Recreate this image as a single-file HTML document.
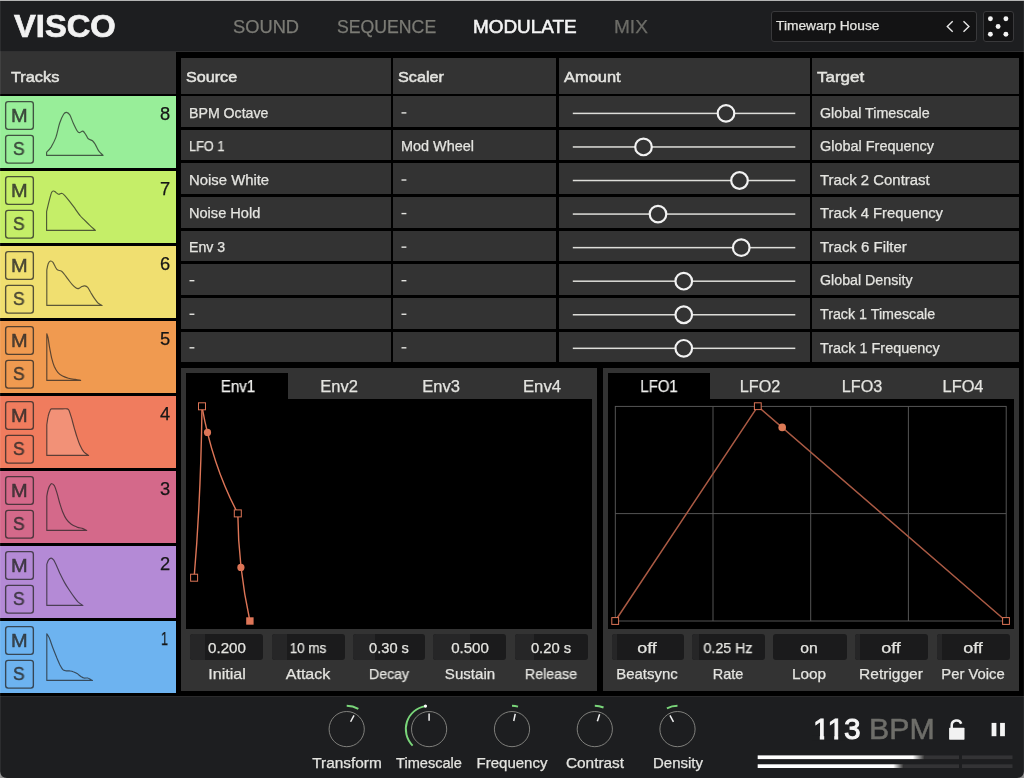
<!DOCTYPE html>
<html lang="en"><head><meta charset="utf-8"><title>VISCO</title>
<style>
html,body{margin:0;padding:0;background:#000;}
body{width:1024px;height:778px;position:relative;overflow:hidden;font-family:"Liberation Sans", sans-serif;}
.b{position:absolute;box-sizing:border-box;}
.t{will-change:transform;position:absolute;white-space:nowrap;line-height:normal;display:inline-block;}
svg{position:absolute;left:0;top:0;}

.hdr{left:0;top:0;width:1024px;height:52.3px;background:#1d1e20;border-bottom:1.5px solid #303031;}
.ftr{left:0;top:695.7px;width:1024px;height:83px;background:#1d1e20;border-top:1.6px solid #2b2b2c;}
.cell{background:#333;}
.ms{border:1.5px solid rgba(45,45,45,.75);border-radius:3px;}
.vb{background:#1b1b1c;border-radius:3px;height:26px;top:634px;}
.vf{background:#262627;border-radius:3px 0 0 3px;height:26px;top:634px;}

</style></head><body>
<div class="b hdr"></div>
<div class="b" style="left:0;top:0;width:1024px;height:1px;background:#b4b4b4"></div>
<div class="b " style="left:770.7px;top:11px;width:206.00px;height:30.50px;background:#131314;border:1px solid #39393b;border-radius:3px;"></div>
<div class="b " style="left:983px;top:11px;width:30.50px;height:30.50px;background:#131314;border:1px solid #39393b;border-radius:3px;"></div>
<svg width="1024" height="60" viewBox="0 0 1024 60">
<path d="M952.7 21.3 L947.3 26.5 L952.7 31.7" fill="none" stroke="#e8e8e8" stroke-width="1.4"/>
<path d="M963.5 21.3 L968.9 26.5 L963.5 31.7" fill="none" stroke="#e8e8e8" stroke-width="1.4"/>
<g fill="#f4f4f4"><circle cx="990.4" cy="18.75" r="2.45"/><circle cx="1005.9" cy="18.75" r="2.45"/><circle cx="998.1" cy="26.5" r="2.45"/><circle cx="990.4" cy="34.2" r="2.45"/><circle cx="1005.9" cy="34.2" r="2.45"/></g>
</svg>
<div class="b cell" style="left:0px;top:52px;width:176.00px;height:42.00px;"></div>
<div class="b " style="left:0px;top:96px;width:176.00px;height:72.30px;background:#98ee99;"></div>
<div class="b " style="left:0px;top:171px;width:176.00px;height:72.30px;background:#c5ee68;"></div>
<div class="b " style="left:0px;top:246px;width:176.00px;height:72.30px;background:#f0df70;"></div>
<div class="b " style="left:0px;top:321px;width:176.00px;height:72.30px;background:#f09a50;"></div>
<div class="b " style="left:0px;top:396px;width:176.00px;height:72.30px;background:#f07c5e;"></div>
<div class="b " style="left:0px;top:471px;width:176.00px;height:72.30px;background:#d4698a;"></div>
<div class="b " style="left:0px;top:546px;width:176.00px;height:72.30px;background:#b48ad6;"></div>
<div class="b " style="left:0px;top:621px;width:176.00px;height:72.30px;background:#6db3f0;"></div>
<svg width="180" height="700" viewBox="0 0 180 700"><path d="M46.6 155.4 L46.6 152.3 C47.4 151.4 49.5 149.6 51.1 147.1 C52.6 144.6 54.4 141.5 55.9 137.4 C57.3 133.4 58.4 126.8 59.7 123.0 C61.0 119.1 62.5 116.1 63.6 114.3 C64.7 112.5 65.5 112.3 66.5 112.4 C67.5 112.5 68.6 113.1 69.8 114.9 C70.9 116.7 72.0 120.4 73.2 123.0 C74.4 125.6 76.1 129.1 77.1 130.7 C78.1 132.3 78.4 132.6 79.4 132.6 C80.4 132.7 81.8 130.8 82.9 131.1 C83.9 131.4 84.9 133.3 85.8 134.6 C86.7 135.8 87.1 137.8 88.3 138.8 C89.4 139.8 91.3 139.8 92.5 140.7 C93.7 141.7 94.4 142.9 95.4 144.6 C96.4 146.3 97.4 149.1 98.7 150.9 C100.0 152.7 102.4 154.6 103.1 155.4 L103.1 155.4 L46.6 155.4 Z" fill="none" stroke="rgba(35,35,35,.72)" stroke-width="1.15" stroke-linejoin="round"/><path d="M46.6 230.4 L46.6 211.7 C47.0 209.9 48.3 204.3 49.1 201.1 C50.0 197.8 50.9 194.1 51.6 192.4 C52.4 190.7 52.9 191.0 53.6 191.0 C54.3 191.0 55.0 191.8 55.9 192.4 C56.7 192.9 57.8 194.2 58.8 194.3 C59.7 194.5 60.7 193.2 61.7 193.3 C62.6 193.5 63.3 194.0 64.6 195.3 C65.8 196.6 67.6 198.8 69.4 201.1 C71.1 203.3 73.4 206.4 75.2 208.8 C76.9 211.2 78.5 213.8 80.0 215.5 C81.4 217.3 82.2 217.8 83.8 219.4 C85.4 221.0 87.7 223.3 89.6 225.2 C91.5 227.0 94.4 229.5 95.4 230.4 L95.4 230.4 L46.6 230.4 Z" fill="none" stroke="rgba(35,35,35,.72)" stroke-width="1.15" stroke-linejoin="round"/><path d="M46.8 305.4 L46.8 270.1 C47.0 269.0 47.6 265.2 48.2 263.7 C48.8 262.2 49.7 261.3 50.5 261.0 C51.3 260.8 52.2 261.4 53.0 262.4 C53.8 263.4 54.7 265.9 55.5 267.2 C56.3 268.5 56.8 269.5 57.8 270.1 C58.8 270.7 60.2 270.3 61.3 271.1 C62.4 271.8 63.4 273.1 64.6 274.5 C65.7 276.0 67.1 278.1 68.4 279.7 C69.7 281.4 71.0 283.2 72.3 284.6 C73.5 285.9 75.0 287.4 76.1 288.0 C77.2 288.7 78.0 288.7 79.0 288.4 C80.0 288.2 80.9 286.9 81.9 286.5 C82.9 286.1 83.8 285.7 84.8 285.9 C85.8 286.1 86.7 286.4 87.7 287.4 C88.6 288.5 89.5 290.4 90.6 292.3 C91.7 294.1 93.1 296.6 94.4 298.4 C95.7 300.3 97.0 302.1 98.3 303.3 C99.6 304.4 101.5 305.0 102.1 305.4 L102.1 305.4 L46.8 305.4 Z" fill="none" stroke="rgba(35,35,35,.72)" stroke-width="1.15" stroke-linejoin="round"/><path d="M46.8 380.4 L46.8 333.7 C47.0 334.5 47.7 336.1 48.2 338.5 C48.6 340.9 49.1 345.0 49.7 348.2 C50.3 351.4 50.9 354.8 51.6 357.8 C52.4 360.9 53.3 364.1 54.3 366.5 C55.4 368.9 56.4 370.7 57.8 372.3 C59.2 373.9 60.9 375.1 62.6 376.1 C64.4 377.1 66.3 377.7 68.4 378.2 C70.5 378.8 73.1 379.1 75.2 379.4 C77.2 379.7 79.7 380.0 80.6 380.2 L80.6 380.4 L46.8 380.4 Z" fill="none" stroke="rgba(35,35,35,.72)" stroke-width="1.15" stroke-linejoin="round"/><path d="M46.8 455.4 L46.8 424.9 C47.0 423.5 47.6 418.7 48.2 416.2 C48.7 413.8 49.5 411.7 50.1 410.5 C50.7 409.2 50.0 409.2 51.6 408.9 C53.2 408.7 57.1 408.9 59.7 408.9 C62.4 408.9 65.8 408.5 67.4 408.9 C69.0 409.3 68.7 410.0 69.4 411.4 C70.0 412.8 70.5 414.5 71.3 417.2 C72.1 419.9 73.2 424.4 74.2 427.8 C75.2 431.2 76.1 434.6 77.1 437.4 C78.0 440.3 78.8 442.7 80.0 445.2 C81.1 447.6 82.4 450.2 83.8 451.9 C85.3 453.6 87.8 454.8 88.6 455.4 L88.6 455.4 L46.8 455.4 Z" fill="rgba(255,255,255,.16)" stroke="rgba(35,35,35,.72)" stroke-width="1.15" stroke-linejoin="round"/><path d="M46.8 530.4 L46.8 496.2 C47.0 495.1 47.6 491.4 48.2 489.5 C48.7 487.6 49.5 486.0 50.1 485.1 C50.7 484.1 51.3 483.6 52.0 483.7 C52.7 483.8 53.5 484.2 54.3 485.6 C55.1 487.1 55.9 489.5 56.8 492.4 C57.7 495.3 58.8 499.8 59.7 503.0 C60.7 506.2 61.5 508.9 62.6 511.7 C63.7 514.4 65.0 517.3 66.5 519.4 C67.9 521.5 69.5 522.9 71.3 524.2 C73.1 525.5 75.2 526.3 77.1 527.1 C79.0 527.8 81.3 528.1 82.9 528.6 C84.5 529.2 86.1 530.1 86.7 530.4 L86.7 530.4 L46.8 530.4 Z" fill="none" stroke="rgba(35,35,35,.72)" stroke-width="1.15" stroke-linejoin="round"/><path d="M46.8 605.4 L46.8 564.3 C47.1 563.6 47.8 560.9 48.6 559.9 C49.3 558.9 50.2 558.1 51.1 558.1 C51.9 558.1 52.8 558.9 53.6 559.9 C54.4 560.9 54.8 562.1 55.9 564.3 C56.9 566.5 58.3 569.9 59.7 573.0 C61.2 576.0 62.9 579.7 64.6 582.6 C66.2 585.5 67.8 587.9 69.4 590.3 C71.0 592.7 72.7 595.2 74.2 597.1 C75.6 599.0 76.6 600.5 78.0 601.9 C79.5 603.3 82.1 604.8 82.9 605.4 L82.9 605.4 L46.8 605.4 Z" fill="none" stroke="rgba(35,35,35,.72)" stroke-width="1.15" stroke-linejoin="round"/><path d="M46.8 680.4 L46.8 633.7 C47.2 634.4 48.1 635.2 49.1 637.6 C50.2 640.0 51.7 644.8 53.0 648.2 C54.3 651.5 55.7 655.1 56.8 657.8 C58.0 660.5 58.8 662.6 59.7 664.6 C60.7 666.5 61.7 668.3 62.6 669.4 C63.6 670.4 64.4 670.5 65.5 670.7 C66.6 671.0 68.1 670.8 69.4 670.9 C70.7 671.1 71.9 671.2 73.2 671.7 C74.5 672.1 75.8 672.8 77.1 673.6 C78.4 674.4 79.8 675.8 80.9 676.5 C82.1 677.2 82.7 677.8 83.8 678.0 C85.0 678.3 86.6 677.8 87.7 678.0 C88.8 678.3 89.8 679.0 90.6 679.4 C91.4 679.8 92.2 680.2 92.5 680.4 L92.5 680.4 L46.8 680.4 Z" fill="none" stroke="rgba(35,35,35,.72)" stroke-width="1.15" stroke-linejoin="round"/><rect x="5.65" y="101.65" width="27.7" height="27.7" rx="2.5" fill="none" stroke="rgba(40,40,40,.78)" stroke-width="1.35"/><rect x="5.65" y="135.35" width="27.7" height="27.7" rx="2.5" fill="none" stroke="rgba(40,40,40,.78)" stroke-width="1.35"/><rect x="5.65" y="176.65" width="27.7" height="27.7" rx="2.5" fill="none" stroke="rgba(40,40,40,.78)" stroke-width="1.35"/><rect x="5.65" y="210.35" width="27.7" height="27.7" rx="2.5" fill="none" stroke="rgba(40,40,40,.78)" stroke-width="1.35"/><rect x="5.65" y="251.65" width="27.7" height="27.7" rx="2.5" fill="none" stroke="rgba(40,40,40,.78)" stroke-width="1.35"/><rect x="5.65" y="285.35" width="27.7" height="27.7" rx="2.5" fill="none" stroke="rgba(40,40,40,.78)" stroke-width="1.35"/><rect x="5.65" y="326.65" width="27.7" height="27.7" rx="2.5" fill="none" stroke="rgba(40,40,40,.78)" stroke-width="1.35"/><rect x="5.65" y="360.35" width="27.7" height="27.7" rx="2.5" fill="none" stroke="rgba(40,40,40,.78)" stroke-width="1.35"/><rect x="5.65" y="401.65" width="27.7" height="27.7" rx="2.5" fill="none" stroke="rgba(40,40,40,.78)" stroke-width="1.35"/><rect x="5.65" y="435.35" width="27.7" height="27.7" rx="2.5" fill="none" stroke="rgba(40,40,40,.78)" stroke-width="1.35"/><rect x="5.65" y="476.65" width="27.7" height="27.7" rx="2.5" fill="none" stroke="rgba(40,40,40,.78)" stroke-width="1.35"/><rect x="5.65" y="510.35" width="27.7" height="27.7" rx="2.5" fill="none" stroke="rgba(40,40,40,.78)" stroke-width="1.35"/><rect x="5.65" y="551.65" width="27.7" height="27.7" rx="2.5" fill="none" stroke="rgba(40,40,40,.78)" stroke-width="1.35"/><rect x="5.65" y="585.35" width="27.7" height="27.7" rx="2.5" fill="none" stroke="rgba(40,40,40,.78)" stroke-width="1.35"/><rect x="5.65" y="626.65" width="27.7" height="27.7" rx="2.5" fill="none" stroke="rgba(40,40,40,.78)" stroke-width="1.35"/><rect x="5.65" y="660.35" width="27.7" height="27.7" rx="2.5" fill="none" stroke="rgba(40,40,40,.78)" stroke-width="1.35"/></svg>
<div class="b cell" style="left:181px;top:57.5px;width:209.50px;height:36.30px;"></div>
<div class="b cell" style="left:393px;top:57.5px;width:162.70px;height:36.30px;"></div>
<div class="b cell" style="left:558.5px;top:57.5px;width:251.00px;height:36.30px;"></div>
<div class="b cell" style="left:812px;top:57.5px;width:207.00px;height:36.30px;"></div>
<div class="b cell" style="left:181px;top:96.1px;width:209.50px;height:30.70px;"></div>
<div class="b cell" style="left:393px;top:96.1px;width:162.70px;height:30.70px;"></div>
<div class="b cell" style="left:558.5px;top:96.1px;width:251.00px;height:30.70px;"></div>
<div class="b cell" style="left:812px;top:96.1px;width:207.00px;height:30.70px;"></div>
<div class="b cell" style="left:181px;top:129.76px;width:209.50px;height:30.70px;"></div>
<div class="b cell" style="left:393px;top:129.76px;width:162.70px;height:30.70px;"></div>
<div class="b cell" style="left:558.5px;top:129.76px;width:251.00px;height:30.70px;"></div>
<div class="b cell" style="left:812px;top:129.76px;width:207.00px;height:30.70px;"></div>
<div class="b cell" style="left:181px;top:163.42px;width:209.50px;height:30.70px;"></div>
<div class="b cell" style="left:393px;top:163.42px;width:162.70px;height:30.70px;"></div>
<div class="b cell" style="left:558.5px;top:163.42px;width:251.00px;height:30.70px;"></div>
<div class="b cell" style="left:812px;top:163.42px;width:207.00px;height:30.70px;"></div>
<div class="b cell" style="left:181px;top:197.08px;width:209.50px;height:30.70px;"></div>
<div class="b cell" style="left:393px;top:197.08px;width:162.70px;height:30.70px;"></div>
<div class="b cell" style="left:558.5px;top:197.08px;width:251.00px;height:30.70px;"></div>
<div class="b cell" style="left:812px;top:197.08px;width:207.00px;height:30.70px;"></div>
<div class="b cell" style="left:181px;top:230.74px;width:209.50px;height:30.70px;"></div>
<div class="b cell" style="left:393px;top:230.74px;width:162.70px;height:30.70px;"></div>
<div class="b cell" style="left:558.5px;top:230.74px;width:251.00px;height:30.70px;"></div>
<div class="b cell" style="left:812px;top:230.74px;width:207.00px;height:30.70px;"></div>
<div class="b cell" style="left:181px;top:264.4px;width:209.50px;height:30.70px;"></div>
<div class="b cell" style="left:393px;top:264.4px;width:162.70px;height:30.70px;"></div>
<div class="b cell" style="left:558.5px;top:264.4px;width:251.00px;height:30.70px;"></div>
<div class="b cell" style="left:812px;top:264.4px;width:207.00px;height:30.70px;"></div>
<div class="b cell" style="left:181px;top:298.06px;width:209.50px;height:30.70px;"></div>
<div class="b cell" style="left:393px;top:298.06px;width:162.70px;height:30.70px;"></div>
<div class="b cell" style="left:558.5px;top:298.06px;width:251.00px;height:30.70px;"></div>
<div class="b cell" style="left:812px;top:298.06px;width:207.00px;height:30.70px;"></div>
<div class="b cell" style="left:181px;top:331.72px;width:209.50px;height:30.70px;"></div>
<div class="b cell" style="left:393px;top:331.72px;width:162.70px;height:30.70px;"></div>
<div class="b cell" style="left:558.5px;top:331.72px;width:251.00px;height:30.70px;"></div>
<div class="b cell" style="left:812px;top:331.72px;width:207.00px;height:30.70px;"></div>
<svg width="1024" height="370" viewBox="0 0 1024 370"><rect x="401.5" y="112.20" width="4.9" height="1.4" fill="#e4e4e0"/><rect x="572.8" y="112.65" width="222.5" height="1.5" fill="#dededa"/><circle cx="726" cy="113.40" r="8.3" fill="#333" stroke="#f2f2f2" stroke-width="2.2"/><rect x="572.8" y="146.21" width="222.5" height="1.5" fill="#dededa"/><circle cx="643.5" cy="146.96" r="8.3" fill="#333" stroke="#f2f2f2" stroke-width="2.2"/><rect x="401.5" y="179.32" width="4.9" height="1.4" fill="#e4e4e0"/><rect x="572.8" y="179.77" width="222.5" height="1.5" fill="#dededa"/><circle cx="739.5" cy="180.52" r="8.3" fill="#333" stroke="#f2f2f2" stroke-width="2.2"/><rect x="401.5" y="212.88" width="4.9" height="1.4" fill="#e4e4e0"/><rect x="572.8" y="213.33" width="222.5" height="1.5" fill="#dededa"/><circle cx="658" cy="214.08" r="8.3" fill="#333" stroke="#f2f2f2" stroke-width="2.2"/><rect x="401.5" y="246.44" width="4.9" height="1.4" fill="#e4e4e0"/><rect x="572.8" y="246.89" width="222.5" height="1.5" fill="#dededa"/><circle cx="741.25" cy="247.64" r="8.3" fill="#333" stroke="#f2f2f2" stroke-width="2.2"/><rect x="189.5" y="280.00" width="4.9" height="1.4" fill="#e4e4e0"/><rect x="401.5" y="280.00" width="4.9" height="1.4" fill="#e4e4e0"/><rect x="572.8" y="280.45" width="222.5" height="1.5" fill="#dededa"/><circle cx="683.75" cy="281.20" r="8.3" fill="#333" stroke="#f2f2f2" stroke-width="2.2"/><rect x="189.5" y="313.56" width="4.9" height="1.4" fill="#e4e4e0"/><rect x="401.5" y="313.56" width="4.9" height="1.4" fill="#e4e4e0"/><rect x="572.8" y="314.01" width="222.5" height="1.5" fill="#dededa"/><circle cx="683.75" cy="314.76" r="8.3" fill="#333" stroke="#f2f2f2" stroke-width="2.2"/><rect x="189.5" y="347.12" width="4.9" height="1.4" fill="#e4e4e0"/><rect x="401.5" y="347.12" width="4.9" height="1.4" fill="#e4e4e0"/><rect x="572.8" y="347.57" width="222.5" height="1.5" fill="#dededa"/><circle cx="683.75" cy="348.32" r="8.3" fill="#333" stroke="#f2f2f2" stroke-width="2.2"/></svg>
<div class="b cell" style="left:181.2px;top:368px;width:415.90px;height:322.60px;"></div>
<div class="b cell" style="left:602.6px;top:368px;width:416.40px;height:322.60px;"></div>
<div class="b " style="left:186px;top:373px;width:406.20px;height:255.60px;background:#000;"></div>
<div class="b " style="left:607.8px;top:373px;width:406.40px;height:255.60px;background:#000;"></div>
<div class="b cell" style="left:288px;top:373px;width:304.30px;height:25.70px;"></div>
<div class="b cell" style="left:710px;top:373px;width:304.20px;height:25.70px;"></div>
<div class="b vb" style="left:190.4px;top:634px;width:73.00px;height:25.80px;"></div>
<div class="b vf" style="left:190.4px;top:634px;width:14.60px;height:25.80px;"></div>
<div class="b vb" style="left:272.2px;top:634px;width:72.50px;height:25.80px;"></div>
<div class="b vf" style="left:272.2px;top:634px;width:14.50px;height:25.80px;"></div>
<div class="b vb" style="left:353px;top:634px;width:72.10px;height:25.80px;"></div>
<div class="b vf" style="left:353px;top:634px;width:21.63px;height:25.80px;"></div>
<div class="b vb" style="left:433px;top:634px;width:73.00px;height:25.80px;"></div>
<div class="b vf" style="left:433px;top:634px;width:36.50px;height:25.80px;"></div>
<div class="b vb" style="left:514.7px;top:634px;width:73.00px;height:25.80px;"></div>
<div class="b vf" style="left:514.7px;top:634px;width:18.98px;height:25.80px;"></div>
<div class="b vb" style="left:612.2px;top:634px;width:71.70px;height:25.80px;"></div>
<div class="b vf" style="left:612.2px;top:634px;width:5.02px;height:25.80px;"></div>
<div class="b vb" style="left:692.2px;top:634px;width:73.00px;height:25.80px;"></div>
<div class="b vf" style="left:692.2px;top:634px;width:7.30px;height:25.80px;"></div>
<div class="b vb" style="left:773px;top:634px;width:73.50px;height:25.80px;"></div>
<div class="b vb" style="left:854.9px;top:634px;width:73.40px;height:25.80px;"></div>
<div class="b vf" style="left:854.9px;top:634px;width:5.14px;height:25.80px;"></div>
<div class="b vb" style="left:936.6px;top:634px;width:73.00px;height:25.80px;"></div>
<div class="b vf" style="left:936.6px;top:634px;width:5.11px;height:25.80px;"></div>
<svg width="1024" height="700" viewBox="0 0 1024 700">
<g fill="none" stroke="#dd7557" stroke-width="1.4">
<path d="M194.1 577.7 Q200.8 500 202 406.7"/>
<path d="M202 406.7 Q212.5 466 237.8 513.4"/>
<path d="M237.8 513.4 Q238.2 567 249.9 621"/>
</g>
<g fill="#000" stroke="#dd7557" stroke-width="1">
<rect x="190.6" y="574.2" width="7" height="7"/>
<rect x="198.5" y="402.8" width="7" height="7"/>
<rect x="234.3" y="509.9" width="7" height="7"/>
</g>
<rect x="246.2" y="617.3" width="7.4" height="7.4" fill="#dd7557"/>
<circle cx="207.5" cy="432.4" r="3.6" fill="#dd7557"/>
<circle cx="240.9" cy="567.4" r="3.6" fill="#dd7557"/>
<g stroke="#595959" stroke-width="0.95" fill="none">
<rect x="615.3" y="406.4" width="390.9" height="214.6"/>
<path d="M713 406.4V621M810.7 406.4V621M908.4 406.4V621M615.3 513.6H1006.2"/>
</g>
<path d="M615.2 621 L757.8 406.3 L1005.9 621" fill="none" stroke="#aa5a44" stroke-width="1.5"/>
<g fill="#000" stroke="#dd7557" stroke-width="1">
<rect x="611.8" y="617.6" width="6.8" height="6.8"/>
<rect x="754.4" y="402.8" width="6.8" height="6.8"/>
<rect x="1002.6" y="617.6" width="6.8" height="6.8"/>
</g>
<circle cx="782.2" cy="427.4" r="3.8" fill="#dc7a56"/>
</svg>
<div class="b ftr"></div>
<svg width="1024" height="778" viewBox="0 0 1024 778"><circle cx="346.7" cy="729.1" r="17.6" fill="none" stroke="#8a8a86" stroke-width="0.9"/><path d="M346.70 705.80 A23.3 23.3 0 0 1 358.35 708.92" fill="none" stroke="#7ad67a" stroke-width="1.9"/><path d="M350.60 721.77 L354.02 715.33" stroke="#f0f0f0" stroke-width="1.5"/><circle cx="429.1" cy="729.1" r="17.6" fill="none" stroke="#8a8a86" stroke-width="0.9"/><path d="M412.62 745.58 A23.3 23.3 0 0 1 425.46 706.09" fill="none" stroke="#7ad67a" stroke-width="1.9"/><path d="M429.10 720.80 L429.10 713.50" stroke="#f0f0f0" stroke-width="1.5"/><circle cx="425.46" cy="706.09" r="1.6" fill="#fff"/><circle cx="512" cy="729.1" r="17.6" fill="none" stroke="#8a8a86" stroke-width="0.9"/><path d="M512.00 705.80 A23.3 23.3 0 0 1 518.03 706.59" fill="none" stroke="#7ad67a" stroke-width="1.9"/><path d="M513.73 720.98 L515.24 713.84" stroke="#f0f0f0" stroke-width="1.5"/><circle cx="594.8" cy="729.1" r="17.6" fill="none" stroke="#8a8a86" stroke-width="0.9"/><path d="M594.80 705.80 A23.3 23.3 0 0 1 603.53 707.50" fill="none" stroke="#7ad67a" stroke-width="1.9"/><path d="M597.36 721.21 L599.62 714.26" stroke="#f0f0f0" stroke-width="1.5"/><circle cx="677.5" cy="729.1" r="17.6" fill="none" stroke="#8a8a86" stroke-width="0.9"/><path d="M666.92 708.34 A23.3 23.3 0 0 1 677.50 705.80" fill="none" stroke="#7ad67a" stroke-width="1.9"/><path d="M673.48 721.84 L669.94 715.46" stroke="#f0f0f0" stroke-width="1.5"/><rect x="949.1" y="727.8" width="15.4" height="11.9" rx="0.6" fill="#f2f2f2"/><path d="M951.7 728.5 V725.4 A4.9 4.9 0 0 1 961.2 723.7" fill="none" stroke="#f2f2f2" stroke-width="2.5"/><rect x="991.6" y="722.9" width="4.8" height="13.3" fill="#f4f4f4"/><rect x="1000.1" y="722.9" width="4.8" height="13.3" fill="#f4f4f4"/><defs><linearGradient id="mg1" x1="0" x2="1"><stop offset="0.93" stop-color="#fff"/><stop offset="1" stop-color="#333"/></linearGradient></defs><rect x="757.7" y="755.4" width="201.3" height="3.7" fill="#333335"/><rect x="962" y="755.4" width="50.5" height="3.7" fill="#333335"/><rect x="757.7" y="755.4" width="166.8" height="3.7" fill="url(#mg1)"/><rect x="757.7" y="764.3" width="201.3" height="3.7" fill="#333335"/><rect x="962" y="764.3" width="50.5" height="3.7" fill="#333335"/><rect x="757.7" y="764.3" width="145.8" height="3.7" fill="url(#mg1)"/><path d="M0 778 V771.5 Q0.5 777.5 7 778 Z" fill="#8e8e8e"/><path d="M1024 778 V771.5 Q1023.5 777.5 1017 778 Z" fill="#8e8e8e"/><rect x="0" y="1" width="1" height="777" fill="rgba(255,255,255,.07)"/><rect x="1023" y="1" width="1" height="777" fill="rgba(255,255,255,.05)"/></svg>

<span class="t" style="left:13.52px;transform-origin:0 0;top:9.08px;font-size:31.4px;color:#f2f2f2;font-weight:700;-webkit-text-stroke:0.7px #f2f2f2;transform:scaleX(1.0424);">VISCO</span>
<span class="t" style="left:232.95px;transform-origin:0 0;top:17.26px;font-size:17.5px;color:#7b7b75;font-weight:400;-webkit-text-stroke:0.25px #7b7b75;transform:scaleX(1.0454);">SOUND</span>
<span class="t" style="left:336.65px;transform-origin:0 0;top:17.26px;font-size:17.5px;color:#7b7b75;font-weight:400;-webkit-text-stroke:0.25px #7b7b75;transform:scaleX(1.0097);">SEQUENCE</span>
<span class="t" style="left:472.95px;transform-origin:0 0;top:17.26px;font-size:17.5px;color:#f4f4f4;font-weight:400;-webkit-text-stroke:0.55px #f4f4f4;transform:scaleX(1.0796);">MODULATE</span>
<span class="t" style="left:613.95px;transform-origin:0 0;top:17.26px;font-size:17.5px;color:#6c6c67;font-weight:400;-webkit-text-stroke:0.25px #6c6c67;transform:scaleX(1.0884);">MIX</span>
<span class="t" style="left:775.98px;transform-origin:0 0;top:18.10px;font-size:13.7px;color:#e4e4e0;font-weight:400;-webkit-text-stroke:0.25px #e4e4e0;transform:scaleX(1.0047);">Timewarp House</span>
<span class="t" style="left:11.12px;transform-origin:0 0;top:69.09px;font-size:14.6px;color:#e4e4e0;font-weight:400;-webkit-text-stroke:0.5px #e4e4e0;transform:scaleX(1.1171);">Tracks</span>
<span class="t" style="left:10.80px;transform-origin:0 0;top:104.55px;font-size:18.4px;color:rgba(40,40,40,.8);font-weight:400;-webkit-text-stroke:0.45px rgba(40,40,40,.8);transform:scaleX(1.0866);">M</span>
<span class="t" style="left:13.20px;transform-origin:0 0;top:138.45px;font-size:18.4px;color:rgba(40,40,40,.8);font-weight:400;-webkit-text-stroke:0.45px rgba(40,40,40,.8);transform:scaleX(0.9491);">S</span>
<span class="t" style="left:160.25px;transform-origin:0 0;top:103.86px;font-size:17.5px;color:#161616;font-weight:400;-webkit-text-stroke:0.25px #161616;transform:scaleX(1.0453);">8</span>
<span class="t" style="left:10.80px;transform-origin:0 0;top:179.55px;font-size:18.4px;color:rgba(40,40,40,.8);font-weight:400;-webkit-text-stroke:0.45px rgba(40,40,40,.8);transform:scaleX(1.0866);">M</span>
<span class="t" style="left:13.20px;transform-origin:0 0;top:213.45px;font-size:18.4px;color:rgba(40,40,40,.8);font-weight:400;-webkit-text-stroke:0.45px rgba(40,40,40,.8);transform:scaleX(0.9491);">S</span>
<span class="t" style="left:160.25px;transform-origin:0 0;top:178.86px;font-size:17.5px;color:#161616;font-weight:400;-webkit-text-stroke:0.25px #161616;transform:scaleX(1.0453);">7</span>
<span class="t" style="left:10.80px;transform-origin:0 0;top:254.55px;font-size:18.4px;color:rgba(40,40,40,.8);font-weight:400;-webkit-text-stroke:0.45px rgba(40,40,40,.8);transform:scaleX(1.0866);">M</span>
<span class="t" style="left:13.20px;transform-origin:0 0;top:288.45px;font-size:18.4px;color:rgba(40,40,40,.8);font-weight:400;-webkit-text-stroke:0.45px rgba(40,40,40,.8);transform:scaleX(0.9491);">S</span>
<span class="t" style="left:160.25px;transform-origin:0 0;top:253.86px;font-size:17.5px;color:#161616;font-weight:400;-webkit-text-stroke:0.25px #161616;transform:scaleX(1.0453);">6</span>
<span class="t" style="left:10.80px;transform-origin:0 0;top:329.55px;font-size:18.4px;color:rgba(40,40,40,.8);font-weight:400;-webkit-text-stroke:0.45px rgba(40,40,40,.8);transform:scaleX(1.0866);">M</span>
<span class="t" style="left:13.20px;transform-origin:0 0;top:363.45px;font-size:18.4px;color:rgba(40,40,40,.8);font-weight:400;-webkit-text-stroke:0.45px rgba(40,40,40,.8);transform:scaleX(0.9491);">S</span>
<span class="t" style="left:160.25px;transform-origin:0 0;top:328.86px;font-size:17.5px;color:#161616;font-weight:400;-webkit-text-stroke:0.25px #161616;transform:scaleX(1.0453);">5</span>
<span class="t" style="left:10.80px;transform-origin:0 0;top:404.55px;font-size:18.4px;color:rgba(40,40,40,.8);font-weight:400;-webkit-text-stroke:0.45px rgba(40,40,40,.8);transform:scaleX(1.0866);">M</span>
<span class="t" style="left:13.20px;transform-origin:0 0;top:438.45px;font-size:18.4px;color:rgba(40,40,40,.8);font-weight:400;-webkit-text-stroke:0.45px rgba(40,40,40,.8);transform:scaleX(0.9491);">S</span>
<span class="t" style="left:160.25px;transform-origin:0 0;top:403.86px;font-size:17.5px;color:#161616;font-weight:400;-webkit-text-stroke:0.25px #161616;transform:scaleX(1.0453);">4</span>
<span class="t" style="left:10.80px;transform-origin:0 0;top:479.55px;font-size:18.4px;color:rgba(40,40,40,.8);font-weight:400;-webkit-text-stroke:0.45px rgba(40,40,40,.8);transform:scaleX(1.0866);">M</span>
<span class="t" style="left:13.20px;transform-origin:0 0;top:513.45px;font-size:18.4px;color:rgba(40,40,40,.8);font-weight:400;-webkit-text-stroke:0.45px rgba(40,40,40,.8);transform:scaleX(0.9491);">S</span>
<span class="t" style="left:160.25px;transform-origin:0 0;top:478.86px;font-size:17.5px;color:#161616;font-weight:400;-webkit-text-stroke:0.25px #161616;transform:scaleX(1.0453);">3</span>
<span class="t" style="left:10.80px;transform-origin:0 0;top:554.55px;font-size:18.4px;color:rgba(40,40,40,.8);font-weight:400;-webkit-text-stroke:0.45px rgba(40,40,40,.8);transform:scaleX(1.0866);">M</span>
<span class="t" style="left:13.20px;transform-origin:0 0;top:588.45px;font-size:18.4px;color:rgba(40,40,40,.8);font-weight:400;-webkit-text-stroke:0.45px rgba(40,40,40,.8);transform:scaleX(0.9491);">S</span>
<span class="t" style="left:160.25px;transform-origin:0 0;top:553.86px;font-size:17.5px;color:#161616;font-weight:400;-webkit-text-stroke:0.25px #161616;transform:scaleX(1.0453);">2</span>
<span class="t" style="left:10.80px;transform-origin:0 0;top:629.55px;font-size:18.4px;color:rgba(40,40,40,.8);font-weight:400;-webkit-text-stroke:0.45px rgba(40,40,40,.8);transform:scaleX(1.0866);">M</span>
<span class="t" style="left:13.20px;transform-origin:0 0;top:663.45px;font-size:18.4px;color:rgba(40,40,40,.8);font-weight:400;-webkit-text-stroke:0.45px rgba(40,40,40,.8);transform:scaleX(0.9491);">S</span>
<span class="t" style="left:161.45px;transform-origin:0 0;top:628.86px;font-size:17.5px;color:#161616;font-weight:400;-webkit-text-stroke:0.25px #161616;transform:scaleX(0.7268);">1</span>
<span class="t" style="left:185.72px;transform-origin:0 0;top:69.09px;font-size:14.6px;color:#e4e4e0;font-weight:400;-webkit-text-stroke:0.5px #e4e4e0;transform:scaleX(1.1052);">Source</span>
<span class="t" style="left:397.92px;transform-origin:0 0;top:69.09px;font-size:14.6px;color:#e4e4e0;font-weight:400;-webkit-text-stroke:0.5px #e4e4e0;transform:scaleX(1.1121);">Scaler</span>
<span class="t" style="left:564.32px;transform-origin:0 0;top:69.09px;font-size:14.6px;color:#e4e4e0;font-weight:400;-webkit-text-stroke:0.5px #e4e4e0;transform:scaleX(1.1256);">Amount</span>
<span class="t" style="left:817.12px;transform-origin:0 0;top:69.09px;font-size:14.6px;color:#e4e4e0;font-weight:400;-webkit-text-stroke:0.5px #e4e4e0;transform:scaleX(1.1615);">Target</span>
<span class="t" style="left:188.67px;transform-origin:0 0;top:105.61px;font-size:13.8px;color:#e4e4e0;font-weight:400;-webkit-text-stroke:0.25px #e4e4e0;transform:scaleX(1.0257);">BPM Octave</span>
<span class="t" style="left:819.87px;transform-origin:0 0;top:105.61px;font-size:13.8px;color:#e4e4e0;font-weight:400;-webkit-text-stroke:0.25px #e4e4e0;transform:scaleX(1.0360);">Global Timescale</span>
<span class="t" style="left:188.67px;transform-origin:0 0;top:139.18px;font-size:13.8px;color:#e4e4e0;font-weight:400;-webkit-text-stroke:0.25px #e4e4e0;transform:scaleX(0.9243);">LFO 1</span>
<span class="t" style="left:400.67px;transform-origin:0 0;top:139.18px;font-size:13.8px;color:#e4e4e0;font-weight:400;-webkit-text-stroke:0.25px #e4e4e0;transform:scaleX(1.0467);">Mod Wheel</span>
<span class="t" style="left:819.87px;transform-origin:0 0;top:139.18px;font-size:13.8px;color:#e4e4e0;font-weight:400;-webkit-text-stroke:0.25px #e4e4e0;transform:scaleX(1.0472);">Global Frequency</span>
<span class="t" style="left:188.67px;transform-origin:0 0;top:172.75px;font-size:13.8px;color:#e4e4e0;font-weight:400;-webkit-text-stroke:0.25px #e4e4e0;transform:scaleX(1.0775);">Noise White</span>
<span class="t" style="left:819.87px;transform-origin:0 0;top:172.75px;font-size:13.8px;color:#e4e4e0;font-weight:400;-webkit-text-stroke:0.25px #e4e4e0;transform:scaleX(1.0805);">Track 2 Contrast</span>
<span class="t" style="left:188.67px;transform-origin:0 0;top:206.32px;font-size:13.8px;color:#e4e4e0;font-weight:400;-webkit-text-stroke:0.25px #e4e4e0;transform:scaleX(1.0557);">Noise Hold</span>
<span class="t" style="left:819.87px;transform-origin:0 0;top:206.32px;font-size:13.8px;color:#e4e4e0;font-weight:400;-webkit-text-stroke:0.25px #e4e4e0;transform:scaleX(1.0745);">Track 4 Frequency</span>
<span class="t" style="left:188.67px;transform-origin:0 0;top:239.89px;font-size:13.8px;color:#e4e4e0;font-weight:400;-webkit-text-stroke:0.25px #e4e4e0;transform:scaleX(1.0272);">Env 3</span>
<span class="t" style="left:819.87px;transform-origin:0 0;top:239.89px;font-size:13.8px;color:#e4e4e0;font-weight:400;-webkit-text-stroke:0.25px #e4e4e0;transform:scaleX(1.0845);">Track 6 Filter</span>
<span class="t" style="left:819.87px;transform-origin:0 0;top:273.46px;font-size:13.8px;color:#e4e4e0;font-weight:400;-webkit-text-stroke:0.25px #e4e4e0;transform:scaleX(1.0313);">Global Density</span>
<span class="t" style="left:819.87px;transform-origin:0 0;top:307.03px;font-size:13.8px;color:#e4e4e0;font-weight:400;-webkit-text-stroke:0.25px #e4e4e0;transform:scaleX(1.0341);">Track 1 Timescale</span>
<span class="t" style="left:819.87px;transform-origin:0 0;top:340.60px;font-size:13.8px;color:#e4e4e0;font-weight:400;-webkit-text-stroke:0.25px #e4e4e0;transform:scaleX(1.0448);">Track 1 Frequency</span>
<span class="t" style="left:237.5px;transform-origin:0 0;top:378.02px;font-size:16px;color:#f0f0ee;font-weight:400;-webkit-text-stroke:0.25px #f0f0ee;transform:scaleX(0.9444) translateX(-50%);">Env1</span>
<span class="t" style="left:339.0px;transform-origin:0 0;top:378.02px;font-size:16px;color:#e4e4e0;font-weight:400;-webkit-text-stroke:0.25px #e4e4e0;transform:scaleX(1.0321) translateX(-50%);">Env2</span>
<span class="t" style="left:440.5px;transform-origin:0 0;top:378.02px;font-size:16px;color:#e4e4e0;font-weight:400;-webkit-text-stroke:0.25px #e4e4e0;transform:scaleX(1.0321) translateX(-50%);">Env3</span>
<span class="t" style="left:542.0px;transform-origin:0 0;top:378.02px;font-size:16px;color:#e4e4e0;font-weight:400;-webkit-text-stroke:0.25px #e4e4e0;transform:scaleX(1.0431) translateX(-50%);">Env4</span>
<span class="t" style="left:658.6px;transform-origin:0 0;top:378.02px;font-size:16px;color:#f0f0ee;font-weight:400;-webkit-text-stroke:0.25px #f0f0ee;transform:scaleX(0.9356) translateX(-50%);">LFO1</span>
<span class="t" style="left:760.1px;transform-origin:0 0;top:378.02px;font-size:16px;color:#e4e4e0;font-weight:400;-webkit-text-stroke:0.25px #e4e4e0;transform:scaleX(1.0106) translateX(-50%);">LFO2</span>
<span class="t" style="left:861.6px;transform-origin:0 0;top:378.02px;font-size:16px;color:#e4e4e0;font-weight:400;-webkit-text-stroke:0.25px #e4e4e0;transform:scaleX(1.0106) translateX(-50%);">LFO3</span>
<span class="t" style="left:963.1px;transform-origin:0 0;top:378.02px;font-size:16px;color:#e4e4e0;font-weight:400;-webkit-text-stroke:0.25px #e4e4e0;transform:scaleX(1.0231) translateX(-50%);">LFO4</span>
<span class="t" style="left:226.89999999999998px;transform-origin:0 0;top:639.79px;font-size:14.6px;color:#e4e4e0;font-weight:400;-webkit-text-stroke:0.25px #e4e4e0;transform:scaleX(1.0351) translateX(-50%);">0.200</span>
<span class="t" style="left:226.89999999999998px;transform-origin:0 0;top:665.97px;font-size:14.4px;color:#e4e4e0;font-weight:400;-webkit-text-stroke:0.25px #e4e4e0;transform:scaleX(1.1186) translateX(-50%);">Initial</span>
<span class="t" style="left:308.45px;transform-origin:0 0;top:639.79px;font-size:14.6px;color:#e4e4e0;font-weight:400;-webkit-text-stroke:0.25px #e4e4e0;transform:scaleX(0.9161) translateX(-50%);">10 ms</span>
<span class="t" style="left:308.45px;transform-origin:0 0;top:665.97px;font-size:14.4px;color:#e4e4e0;font-weight:400;-webkit-text-stroke:0.25px #e4e4e0;transform:scaleX(1.1124) translateX(-50%);">Attack</span>
<span class="t" style="left:389.05px;transform-origin:0 0;top:639.79px;font-size:14.6px;color:#e4e4e0;font-weight:400;-webkit-text-stroke:0.25px #e4e4e0;transform:scaleX(1.0012) translateX(-50%);">0.30 s</span>
<span class="t" style="left:389.05px;transform-origin:0 0;top:665.97px;font-size:14.4px;color:#e4e4e0;font-weight:400;-webkit-text-stroke:0.25px #e4e4e0;transform:scaleX(0.9853) translateX(-50%);">Decay</span>
<span class="t" style="left:469.5px;transform-origin:0 0;top:639.79px;font-size:14.6px;color:#e4e4e0;font-weight:400;-webkit-text-stroke:0.25px #e4e4e0;transform:scaleX(1.0324) translateX(-50%);">0.500</span>
<span class="t" style="left:469.5px;transform-origin:0 0;top:665.97px;font-size:14.4px;color:#e4e4e0;font-weight:400;-webkit-text-stroke:0.25px #e4e4e0;transform:scaleX(1.0478) translateX(-50%);">Sustain</span>
<span class="t" style="left:551.2px;transform-origin:0 0;top:639.79px;font-size:14.6px;color:#e4e4e0;font-weight:400;-webkit-text-stroke:0.25px #e4e4e0;transform:scaleX(1.0113) translateX(-50%);">0.20 s</span>
<span class="t" style="left:551.2px;transform-origin:0 0;top:665.97px;font-size:14.4px;color:#e4e4e0;font-weight:400;-webkit-text-stroke:0.25px #e4e4e0;transform:scaleX(0.9921) translateX(-50%);">Release</span>
<span class="t" style="left:647.4499999999999px;transform-origin:0 0;top:639.79px;font-size:14.6px;color:#e4e4e0;font-weight:400;-webkit-text-stroke:0.25px #e4e4e0;transform:scaleX(1.2345) translateX(-50%);">off</span>
<span class="t" style="left:647.4499999999999px;transform-origin:0 0;top:665.97px;font-size:14.4px;color:#e4e4e0;font-weight:400;-webkit-text-stroke:0.25px #e4e4e0;transform:scaleX(1.0404) translateX(-50%);">Beatsync</span>
<span class="t" style="left:728.1px;transform-origin:0 0;top:639.79px;font-size:14.6px;color:#e4e4e0;font-weight:400;-webkit-text-stroke:0.25px #e4e4e0;transform:scaleX(0.9745) translateX(-50%);">0.25 Hz</span>
<span class="t" style="left:728.1px;transform-origin:0 0;top:665.97px;font-size:14.4px;color:#e4e4e0;font-weight:400;-webkit-text-stroke:0.25px #e4e4e0;transform:scaleX(1.0062) translateX(-50%);">Rate</span>
<span class="t" style="left:809.15px;transform-origin:0 0;top:639.79px;font-size:14.6px;color:#e4e4e0;font-weight:400;-webkit-text-stroke:0.25px #e4e4e0;transform:scaleX(1.0788) translateX(-50%);">on</span>
<span class="t" style="left:809.15px;transform-origin:0 0;top:665.97px;font-size:14.4px;color:#e4e4e0;font-weight:400;-webkit-text-stroke:0.25px #e4e4e0;transform:scaleX(1.0650) translateX(-50%);">Loop</span>
<span class="t" style="left:890.9999999999999px;transform-origin:0 0;top:639.79px;font-size:14.6px;color:#e4e4e0;font-weight:400;-webkit-text-stroke:0.25px #e4e4e0;transform:scaleX(1.2345) translateX(-50%);">off</span>
<span class="t" style="left:890.9999999999999px;transform-origin:0 0;top:665.97px;font-size:14.4px;color:#e4e4e0;font-weight:400;-webkit-text-stroke:0.25px #e4e4e0;transform:scaleX(1.0779) translateX(-50%);">Retrigger</span>
<span class="t" style="left:972.5px;transform-origin:0 0;top:639.79px;font-size:14.6px;color:#e4e4e0;font-weight:400;-webkit-text-stroke:0.25px #e4e4e0;transform:scaleX(1.2345) translateX(-50%);">off</span>
<span class="t" style="left:972.5px;transform-origin:0 0;top:665.97px;font-size:14.4px;color:#e4e4e0;font-weight:400;-webkit-text-stroke:0.25px #e4e4e0;transform:scaleX(1.0290) translateX(-50%);">Per Voice</span>
<span class="t" style="left:346.7px;transform-origin:0 0;top:755.13px;font-size:14px;color:#e4e4e0;font-weight:400;-webkit-text-stroke:0.25px #e4e4e0;transform:scaleX(1.0992) translateX(-50%);">Transform</span>
<span class="t" style="left:429.1px;transform-origin:0 0;top:755.13px;font-size:14px;color:#e4e4e0;font-weight:400;-webkit-text-stroke:0.25px #e4e4e0;transform:scaleX(1.0423) translateX(-50%);">Timescale</span>
<span class="t" style="left:512px;transform-origin:0 0;top:755.13px;font-size:14px;color:#e4e4e0;font-weight:400;-webkit-text-stroke:0.25px #e4e4e0;transform:scaleX(1.0741) translateX(-50%);">Frequency</span>
<span class="t" style="left:594.8px;transform-origin:0 0;top:755.13px;font-size:14px;color:#e4e4e0;font-weight:400;-webkit-text-stroke:0.25px #e4e4e0;transform:scaleX(1.0990) translateX(-50%);">Contrast</span>
<span class="t" style="left:677.5px;transform-origin:0 0;top:755.13px;font-size:14px;color:#e4e4e0;font-weight:400;-webkit-text-stroke:0.25px #e4e4e0;transform:scaleX(1.0701) translateX(-50%);">Density</span>
<span class="t" style="left:812.66px;transform-origin:0 0;top:713.36px;font-size:29px;color:#f6f6f6;font-weight:400;-webkit-text-stroke:0.9px #f6f6f6;transform:scaleX(1.0298);">113</span>
<span class="t" style="left:869.06px;transform-origin:0 0;top:713.36px;font-size:29px;color:#6e6e69;font-weight:400;-webkit-text-stroke:0.5px #6e6e69;transform:scaleX(1.0440);">BPM</span>
<svg width="1024" height="778" viewBox="0 0 1024 778" style="pointer-events:none"><g fill="#1d1e20"><rect x="812" y="735.7" width="7.8" height="4.6"/><rect x="824.2" y="735.7" width="10" height="4.6"/><rect x="838.2" y="735.7" width="6.5" height="4.6"/></g></svg>
</body></html>
